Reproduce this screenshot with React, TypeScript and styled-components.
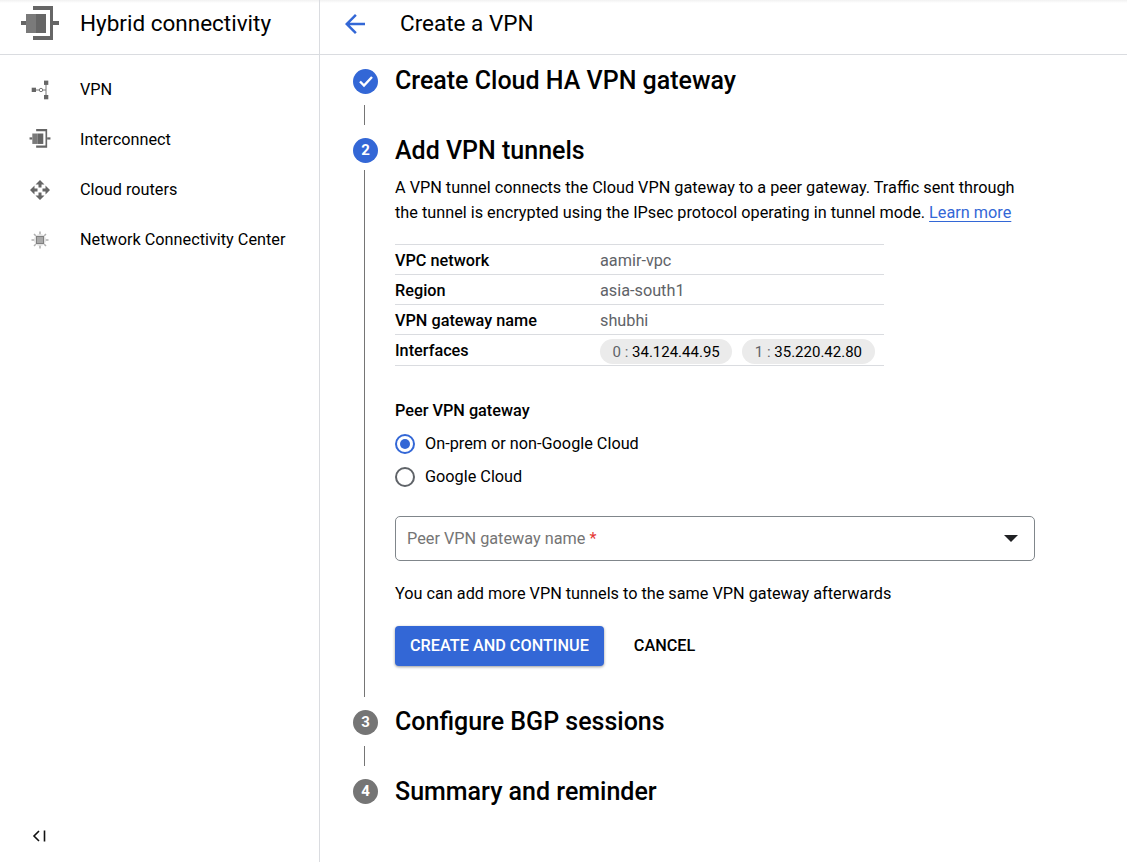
import React from "react";
import styled, { createGlobalStyle } from "styled-components";

const Global = createGlobalStyle`
  html, body { margin: 0; padding: 0; background: #fff; }
  body { font-family: Roboto, "Liberation Sans", sans-serif; color: #000; font-size: 16.25px; }
  * { box-sizing: border-box; }
`;

const Page = styled.div`
  display: flex;
  width: 1127px;
  height: 862px;
  overflow: hidden;
  background: #fff;
`;

const Sidebar = styled.aside`
  width: 320px;
  flex: none;
  border-right: 1px solid #dadce0;
  display: flex;
  flex-direction: column;
`;

const TopBar = styled.header`
  height: 55px;
  flex: none;
  padding-bottom: 6px;
  display: flex;
  align-items: center;
  border-bottom: 1px solid #dadce0;
  background: linear-gradient(#f1f1f1 0, #fff 3px);
`;

const SideTitleIcon = styled.span`
  width: 80px;
  padding-left: 20px;
  flex: none;
  display: flex;
`;

const SideTitle = styled.h1`
  margin: 0 0 2px;
  font-size: 22.5px;
  font-weight: 400;
  line-height: 46px;
`;

const Nav = styled.nav`
  flex: 1;
  padding-top: 9px;
`;

const NavRow = styled.div`
  height: 50px;
  display: flex;
  align-items: center;
  font-size: 16.25px;
`;

const NavIcon = styled.span`
  width: 80px;
  padding-left: 28px;
  flex: none;
  display: flex;
`;

const IconBox = styled.span`
  width: 24px;
  height: 24px;
  display: flex;
  align-items: center;
  justify-content: center;
`;

const Collapse = styled.div`
  height: 52px;
  padding: 18px 0 0 32px;
  flex: none;
`;

const Main = styled.main`
  flex: 1;
  min-width: 0;
  display: flex;
  flex-direction: column;
`;

const BackButton = styled.span`
  width: 80px;
  padding-left: 20px;
  flex: none;
  display: flex;
`;

const PageTitle = styled.h2`
  margin: 0 0 2px;
  font-size: 22.5px;
  font-weight: 400;
`;

const Steps = styled.div`
  padding: 12px 0 0 33px;
`;

const StepHead = styled.div`
  height: 28px;
  display: flex;
  align-items: center;
  gap: 17px;
`;

const Bullet = styled.span<{ $tone: "blue" | "grey" }>`
  width: 25px;
  height: 25px;
  flex: none;
  border-radius: 50%;
  display: flex;
  align-items: center;
  justify-content: center;
  background: ${(p) => (p.$tone === "blue" ? "#3367d6" : "#757575")};
  color: #fff;
  font-size: 15px;
  font-weight: 700;
`;

const StepTitle = styled.h3<{ $low?: boolean }>`
  margin: ${(p) => (p.$low ? "2px 0 0" : "0")};
  font-size: 25px;
  font-weight: 500;
  line-height: 28px;
`;

const Connector = styled.div`
  width: 1px;
  height: 20px;
  margin: 10px 0 11px 11px;
  background: #757575;
`;

const StepBody = styled.div`
  margin: 6px 0 11px 11px;
  padding: 5px 0 0 30px;
  height: 527px;
  border-left: 1px solid #757575;
`;

const Intro = styled.p`
  margin: 0;
  width: 640px;
  font-size: 16.25px;
  line-height: 25px;
`;

const LearnMore = styled.a`
  color: #3367d6;
  text-decoration: underline;
  text-underline-offset: 3px;
`;

const InfoTable = styled.div`
  width: 489px;
  margin-top: 19px;
  border-top: 1px solid #dadce0;
`;

const InfoRow = styled.div`
  height: 30px;
  padding-top: 1px;
  display: flex;
  align-items: center;
  border-bottom: 1px solid #dadce0;
  &:last-child {
    height: 31px;
  }
`;

const InfoLabel = styled.span`
  width: 205px;
  flex: none;
  font-size: 16.25px;
  font-weight: 500;
`;

const InfoValue = styled.span`
  color: #5f6368;
  font-size: 16.25px;
`;

const Chips = styled.div`
  display: flex;
  gap: 10px;
  padding-top: 2px;
`;

const Chip = styled.span`
  height: 25px;
  padding: 0 12.500px;
  border-radius: 13px;
  background: #ebebeb;
  display: flex;
  align-items: center;
  font-size: 15px;
`;

const ChipIndex = styled.span`
  color: #5f6368;
  white-space: pre;
`;

const GroupLabel = styled.div`
  margin-top: 35px;
  font-size: 16.25px;
  font-weight: 500;
  line-height: 20px;
`;

const RadioRow = styled.label`
  height: 33px;
  display: flex;
  align-items: center;
  gap: 10px;
  font-size: 16.25px;
`;

const RadioGroup = styled.div`
  margin-top: 6px;
`;

const RadioMark = styled.span<{ $checked?: boolean }>`
  width: 20px;
  height: 20px;
  flex: none;
  border-radius: 50%;
  border: 2px solid ${(p) => (p.$checked ? "#3367d6" : "#5f6368")};
  display: flex;
  align-items: center;
  justify-content: center;
  &::after {
    content: "";
    width: 10px;
    height: 10px;
    border-radius: 50%;
    background: ${(p) => (p.$checked ? "#3367d6" : "transparent")};
  }
`;

const Select = styled.div`
  width: 640px;
  height: 45px;
  margin-top: 23px;
  padding: 0 16px 0 11px;
  border: 1px solid #80868b;
  border-radius: 5px;
  display: flex;
  align-items: center;
  justify-content: space-between;
  color: #757575;
  font-size: 16.25px;
`;

const Required = styled.span`
  color: #e53935;
`;

const Caret = styled.span`
  width: 0;
  height: 0;
  border-left: 7px solid transparent;
  border-right: 7px solid transparent;
  border-top: 7px solid #202124;
`;

const Hint = styled.p`
  margin: 23px 0 0;
  font-size: 16.25px;
  line-height: 20px;
`;

const Actions = styled.div`
  margin-top: 22px;
  display: flex;
  align-items: center;
  gap: 30px;
`;

const PrimaryButton = styled.button`
  height: 40px;
  padding: 0 15px 2px;
  border: 0;
  border-radius: 4px;
  background: #3367d6;
  color: #fff;
  font: 500 16.25px Roboto, sans-serif;
  box-shadow: 0 1px 3px rgba(0, 0, 0, 0.4);
`;

const TextButton = styled.button`
  padding: 0 0 2px;
  border: 0;
  background: none;
  color: #000;
  font: 500 16.25px Roboto, sans-serif;
`;

const HybridIcon = ({ size }: { size: number }) => (
  <svg width={size} height={size} viewBox="0 0 40 40">
    <path d="M1 17h5v4H1z" fill="#666" />
    <path d="M6 10h10v19H6z" fill="#7a7a7a" />
    <path d="M16 10h10v19H16z" fill="#666" />
    <path d="M13 2h20v34H13v-4h17V6H13z" fill="#666" />
    <path d="M33 17h6v4h-6z" fill="#666" />
  </svg>
);

const VpnIcon = () => (
  <svg width="24" height="24" viewBox="0 0 24 24" fill="none">
    <rect x="3.700" y="10.700" width="4.300" height="4.300" fill="#666" />
    <path d="M8 13h3.300M14.700 13h3.300M18 6v14" stroke="#777" />
    <circle cx="13" cy="13" r="1.700" stroke="#777" />
    <rect x="16" y="3.600" width="4.300" height="4.300" fill="#666" />
    <rect x="16" y="18" width="4.300" height="4.300" fill="#666" />
  </svg>
);

const RouterIcon = () => (
  <svg width="24" height="24" viewBox="0 0 24 24" fill="#666">
    <path d="M12 3l4.500 4.500h-3v3h-3v-3h-3z" />
    <path d="M12 23l4.500-4.500h-3v-3h-3v3h-3z" />
    <path d="M2 13l4.500-4.500v3h3v3h-3v3z" />
    <path d="M22 13l-4.500-4.500v3h-3v3h3v3z" />
  </svg>
);

const HubIcon = () => (
  <svg width="24" height="24" viewBox="0 0 24 24" fill="none">
    <path
      d="M12 4.500v17M3.500 13h17M6 7l12 12M18 7L6 19"
      stroke="#b0b0b0"
      strokeWidth="1.500"
    />
    <circle cx="12" cy="13" r="6" fill="#e2e2e2" />
    <rect x="8.500" y="9.500" width="7" height="7" fill="#a8a8a8" stroke="#808080" />
  </svg>
);

const BackArrow = () => (
  <svg width="30" height="30" viewBox="0 0 24 24" fill="#3367d6">
    <path d="M20 11H7.830l5.590-5.590L12 4l-8 8 8 8 1.410-1.410L7.830 13H20v-2z" />
  </svg>
);

const CollapseIcon = () => (
  <svg width="16" height="14" viewBox="0 0 16 14" fill="none" stroke="#111" strokeWidth="1.600">
    <path d="M7 2L2 7l5 5M12.500 1.500v11" />
  </svg>
);

const CheckIcon = () => (
  <svg width="18" height="18" viewBox="0 0 18 18" fill="none" stroke="#fff" strokeWidth="2.400">
    <path d="M3 9.500l4 4 8-8.500" />
  </svg>
);

const navItems = [
  { label: "VPN", icon: <VpnIcon /> },
  { label: "Interconnect", icon: <HybridIcon size={22} /> },
  { label: "Cloud routers", icon: <RouterIcon /> },
  { label: "Network Connectivity Center", icon: <HubIcon /> },
];

export default function App() {
  return (
    <Page>
      <Global />
      <Sidebar>
        <TopBar>
          <SideTitleIcon>
            <HybridIcon size={40} />
          </SideTitleIcon>
          <SideTitle>Hybrid connectivity</SideTitle>
        </TopBar>
        <Nav>
          {navItems.map((item) => (
            <NavRow key={item.label}>
              <NavIcon>
                <IconBox>{item.icon}</IconBox>
              </NavIcon>
              {item.label}
            </NavRow>
          ))}
        </Nav>
        <Collapse>
          <CollapseIcon />
        </Collapse>
      </Sidebar>
      <Main>
        <TopBar>
          <BackButton>
            <BackArrow />
          </BackButton>
          <PageTitle>Create a VPN</PageTitle>
        </TopBar>
        <Steps>
          <StepHead>
            <Bullet $tone="blue">
              <CheckIcon />
            </Bullet>
            <StepTitle>Create Cloud HA VPN gateway</StepTitle>
          </StepHead>
          <Connector />
          <StepHead>
            <Bullet $tone="blue">2</Bullet>
            <StepTitle $low>Add VPN tunnels</StepTitle>
          </StepHead>
          <StepBody>
            <Intro>
              A VPN tunnel connects the Cloud VPN gateway to a peer gateway. Traffic sent through
              the tunnel is encrypted using the IPsec protocol operating in tunnel mode.{" "}
              <LearnMore>Learn more</LearnMore>
            </Intro>
            <InfoTable>
              <InfoRow>
                <InfoLabel>VPC network</InfoLabel>
                <InfoValue>aamir-vpc</InfoValue>
              </InfoRow>
              <InfoRow>
                <InfoLabel>Region</InfoLabel>
                <InfoValue>asia-south1</InfoValue>
              </InfoRow>
              <InfoRow>
                <InfoLabel>VPN gateway name</InfoLabel>
                <InfoValue>shubhi</InfoValue>
              </InfoRow>
              <InfoRow>
                <InfoLabel>Interfaces</InfoLabel>
                <Chips>
                  <Chip>
                    <ChipIndex>0 : </ChipIndex>34.124.44.95
                  </Chip>
                  <Chip>
                    <ChipIndex>1 : </ChipIndex>35.220.42.80
                  </Chip>
                </Chips>
              </InfoRow>
            </InfoTable>
            <GroupLabel>Peer VPN gateway</GroupLabel>
            <RadioGroup>
              <RadioRow>
                <RadioMark $checked />
                On-prem or non-Google Cloud
              </RadioRow>
              <RadioRow>
                <RadioMark />
                Google Cloud
              </RadioRow>
            </RadioGroup>
            <Select>
              <span>
                Peer VPN gateway name <Required>*</Required>
              </span>
              <Caret />
            </Select>
            <Hint>You can add more VPN tunnels to the same VPN gateway afterwards</Hint>
            <Actions>
              <PrimaryButton>CREATE AND CONTINUE</PrimaryButton>
              <TextButton>CANCEL</TextButton>
            </Actions>
          </StepBody>
          <StepHead>
            <Bullet $tone="grey">3</Bullet>
            <StepTitle>Configure BGP sessions</StepTitle>
          </StepHead>
          <Connector />
          <StepHead>
            <Bullet $tone="grey">4</Bullet>
            <StepTitle $low>Summary and reminder</StepTitle>
          </StepHead>
        </Steps>
      </Main>
    </Page>
  );
}
